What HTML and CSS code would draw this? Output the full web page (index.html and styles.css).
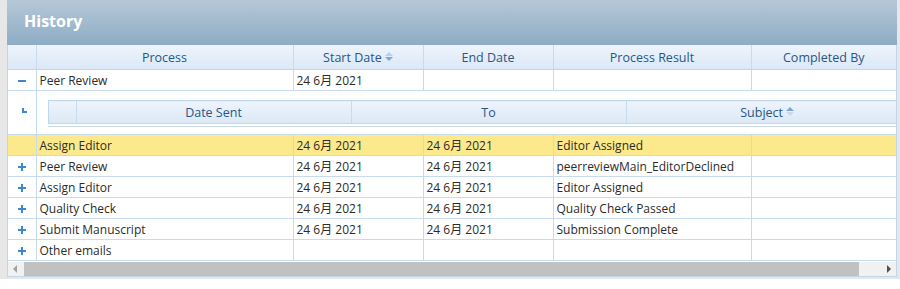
FILE: index.html
```html
<!DOCTYPE html>
<html lang="en">
<head>
    <meta charset="UTF-8">
    <title>History</title>
    <link rel="stylesheet" href="styles.css">
</head>
<body>
    <div class="frame">
        <div class="panel">
            <div class="title">History</div>
            <div class="grid">
                <table class="main">
                    <colgroup>
                        <col class="c-exp">
                        <col class="c-process">
                        <col class="c-date">
                        <col class="c-date">
                        <col class="c-result">
                        <col class="c-by">
                    </colgroup>
                    <thead>
                        <tr>
                            <th></th>
                            <th>Process</th>
                            <th>Start Date <span class="sort down"></span></th>
                            <th>End Date</th>
                            <th>Process Result</th>
                            <th>Completed By</th>
                        </tr>
                    </thead>
                    <tbody>
                        <tr>
                            <td class="exp"><span class="minus"></span></td>
                            <td>Peer Review</td>
                            <td>24 6月 2021</td>
                            <td></td>
                            <td></td>
                            <td></td>
                        </tr>
                        <tr class="detail">
                            <td class="exp"><span class="corner"></span></td>
                            <td colspan="5">
                                <div class="nested">
                                    <table class="sub">
                                        <colgroup>
                                            <col class="s-exp">
                                            <col class="s-wide">
                                            <col class="s-wide">
                                            <col class="s-last">
                                        </colgroup>
                                        <thead>
                                            <tr>
                                                <th></th>
                                                <th>Date Sent</th>
                                                <th>To</th>
                                                <th>Subject <span class="sort up"></span></th>
                                            </tr>
                                        </thead>
                                    </table>
                                    <div class="sub-body"></div>
                                </div>
                            </td>
                        </tr>
                        <tr class="selected">
                            <td class="exp"></td>
                            <td>Assign Editor</td>
                            <td>24 6月 2021</td>
                            <td>24 6月 2021</td>
                            <td>Editor Assigned</td>
                            <td></td>
                        </tr>
                        <tr>
                            <td class="exp"><span class="plus"></span></td>
                            <td>Peer Review</td>
                            <td>24 6月 2021</td>
                            <td>24 6月 2021</td>
                            <td>peerreviewMain_EditorDeclined</td>
                            <td></td>
                        </tr>
                        <tr>
                            <td class="exp"><span class="plus"></span></td>
                            <td>Assign Editor</td>
                            <td>24 6月 2021</td>
                            <td>24 6月 2021</td>
                            <td>Editor Assigned</td>
                            <td></td>
                        </tr>
                        <tr>
                            <td class="exp"><span class="plus"></span></td>
                            <td>Quality Check</td>
                            <td>24 6月 2021</td>
                            <td>24 6月 2021</td>
                            <td>Quality Check Passed</td>
                            <td></td>
                        </tr>
                        <tr>
                            <td class="exp"><span class="plus"></span></td>
                            <td>Submit Manuscript</td>
                            <td>24 6月 2021</td>
                            <td>24 6月 2021</td>
                            <td>Submission Complete</td>
                            <td></td>
                        </tr>
                        <tr>
                            <td class="exp"><span class="plus"></span></td>
                            <td>Other emails</td>
                            <td></td>
                            <td></td>
                            <td></td>
                            <td></td>
                        </tr>
                    </tbody>
                </table>
                <div class="scrollbar">
                    <span class="arrow left"></span>
                    <div class="thumb"></div>
                    <span class="arrow right"></span>
                </div>
            </div>
        </div>
    </div>
</body>
</html>
```

FILE: styles.css
```css
body {
    margin: 0;
    background: #fff;
    font-family: "Open Sans", "Noto Sans CJK SC", sans-serif;
    font-size: 12px;
    color: #2b2b2b;
}

.frame {
    background: #e7e7e7;
    padding: 0 3px 0 7px;
    height: 279px;
}

.panel {
    width: 890px;
    background: #fff;
}

.title {
    height: 45px;
    line-height: 43px;
    padding-left: 17px;
    background: linear-gradient(#b5c8d7, #8eacc5);
    color: #fff;
    font-size: 16px;
    font-weight: bold;
}

.grid {
    border-left: 1px solid #c2d6ea;
    border-right: 1px solid #c2d6ea;
    border-bottom: 1px solid #c2d6ea;
    overflow: hidden;
}

table {
    border-collapse: collapse;
    table-layout: fixed;
}

.main {
    width: 888px;
}

.c-exp { width: 28px; }
.c-process { width: 257px; }
.c-date { width: 130px; }
.c-result { width: 198px; }
.c-by { width: 145px; }

th {
    height: 24px;
    padding: 0;
    background: linear-gradient(#edf4fc, #dbe8f6);
    border-left: 1px solid #c8dbee;
    border-bottom: 1px solid #c2d6ea;
    color: #2a5684;
    font-weight: 500;
    font-size: 12.5px;
    text-align: center;
    white-space: nowrap;
}

th:first-child {
    border-left: none;
}

td {
    height: 20px;
    padding: 0 0 0 3px;
    border-left: 1px solid #c8dbee;
    border-bottom: 1px solid #c8dbee;
    white-space: nowrap;
    overflow: hidden;
}

td:first-child {
    border-left: none;
}

td.exp {
    padding: 0;
    text-align: center;
}

.selected td {
    background: #fce98c;
}

.plus, .minus {
    display: inline-block;
    position: relative;
    width: 8px;
    height: 8px;
    vertical-align: middle;
}

.plus::before, .minus::before {
    content: "";
    position: absolute;
    left: 0;
    top: 3px;
    width: 8px;
    height: 2px;
    background: #3c87d2;
}

.plus::after {
    content: "";
    position: absolute;
    left: 3px;
    top: 0;
    width: 2px;
    height: 8px;
    background: #3c87d2;
}

.detail td {
    height: 43px;
    vertical-align: top;
    padding: 0;
}

.detail td.exp {
    vertical-align: middle;
}

.corner {
    display: inline-block;
    width: 3px;
    height: 3px;
    margin-left: 5px;
    margin-bottom: 4px;
    border-left: 2px solid #3c87d2;
    border-bottom: 2px solid #3c87d2;
}

.nested {
    margin: 9px 0 0 11px;
    width: 850px;
    overflow: hidden;
}

.sub {
    width: 860px;
}

.sub th {
    height: 22px;
    border-top: 1px solid #c2d6ea;
}

.sub th:first-child {
    border-left: 1px solid #c2d6ea;
    border-radius: 4px 0 0 4px;
}

.s-exp { width: 28px; }
.s-wide { width: 275px; }
.s-last { width: 282px; }

.sub-body {
    height: 2px;
    border-bottom: 1px solid #c8dbee;
}

.sort {
    display: inline-block;
    position: relative;
    width: 8px;
    height: 10px;
    vertical-align: middle;
    margin-top: -3px;
}

.sort::before, .sort::after {
    content: "";
    position: absolute;
    left: 0;
    border-left: 4px solid transparent;
    border-right: 4px solid transparent;
}

.sort::before {
    top: 0;
    border-bottom: 4px solid #b9d0e8;
}

.sort::after {
    top: 5px;
    border-top: 4px solid #7ea8d4;
}

.sort.up::before {
    border-bottom-color: #7ea8d4;
}

.sort.up::after {
    border-top-color: #c6daee;
}

.scrollbar {
    display: flex;
    align-items: center;
    height: 14px;
    margin-top: 1px;
    background: #f1f1f1;
}

.thumb {
    width: 835px;
    height: 14px;
    margin-left: 2px;
    background: #c1c1c1;
}

.arrow {
    width: 0;
    height: 0;
    border-top: 4px solid transparent;
    border-bottom: 4px solid transparent;
}

.arrow.left {
    margin-left: 5px;
    border-right: 4px solid #a3a3a3;
    margin-right: 5px;
}

.arrow.right {
    margin-left: auto;
    margin-right: 5px;
    border-left: 4px solid #505050;
}
```
